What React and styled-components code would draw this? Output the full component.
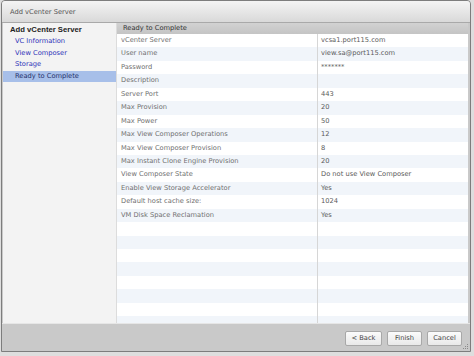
import React from 'react';
import styled, { createGlobalStyle } from 'styled-components';

const GlobalStyle = createGlobalStyle`
  html, body {
    margin: 0;
    padding: 0;
    background: #dedede;
  }
  body {
    font-family: "DejaVu Sans", Verdana, sans-serif;
    font-size: 6.7px;
  }
`;

const Window = styled.div`
  position: relative;
  margin-left: 1px;
  width: 470px;
  height: 352px;
  box-sizing: border-box;
  border: 1px solid #7d7d7d;
  border-radius: 4px 4px 0 0;
  background: #c9c9c9;
  display: flex;
  flex-direction: column;
  overflow: hidden;
`;

const TitleBar = styled.div`
  height: 21px;
  flex: none;
  display: flex;
  align-items: center;
  padding-left: 8px;
  color: #555;
  font-size: 6.7px;
  background: linear-gradient(#f4f4f4, #d9d9d9);
  border-bottom: 1px solid #a9a9a9;
`;

const Body = styled.div`
  flex: 1;
  display: flex;
  padding: 0 2px 0 1px;
  min-height: 0;
`;

const Nav = styled.div`
  width: 113px;
  flex: none;
  background: #f3f3f3;
  border-right: 1px solid #dcdcdc;
  padding-top: 1px;
`;

const NavTitle = styled.div`
  height: 12px;
  line-height: 12px;
  padding-left: 7px;
  font-family: "Liberation Sans", Arial, sans-serif;
  font-weight: bold;
  font-size: 7.7px;
  color: #222;
`;

const NavItem = styled.div`
  height: 11.6px;
  line-height: 11.6px;
  padding-left: 12px;
  color: ${({ active }) => (active ? '#1f2f6a' : '#2d32b8')};
  background: ${({ active }) => (active ? '#a7bfe9' : 'transparent')};
`;

const Panel = styled.div`
  flex: 1;
  display: flex;
  flex-direction: column;
  background: #fff;
  overflow: hidden;
`;

const PanelHeader = styled.div`
  height: 11px;
  flex: none;
  line-height: 11px;
  padding-left: 6px;
  color: #333;
  background: linear-gradient(#d2d2d2, #c4c4c4);
`;

const Grid = styled.div`
  flex: 1;
  overflow: hidden;
`;

const Row = styled.div`
  display: grid;
  grid-template-columns: 200px 1fr;
  height: 13.45px;
  line-height: 13.45px;
  background: ${({ alt }) => (alt ? '#f1f5fa' : '#fff')};
  color: #707070;
`;

const Label = styled.div`
  padding-left: 4px;
  white-space: nowrap;
  overflow: hidden;
`;

const Value = styled.div`
  padding-left: 3px;
  border-left: 1px solid #d6d6d6;
  color: #5a5a5a;
  white-space: nowrap;
  overflow: hidden;
`;

const Footer = styled.div`
  height: 26px;
  flex: none;
  display: flex;
  justify-content: flex-end;
  align-items: center;
  gap: 5px;
  padding-right: 8px;
  padding-top: 1px;
  border-top: 1px solid #e6e6e6;
`;

const Button = styled.button`
  height: 15px;
  width: ${({ w }) => w}px;
  padding: 0;
  font-family: inherit;
  font-size: 6.7px;
  color: #444;
  border: 1px solid #a8a8a8;
  border-radius: 2px;
  background: linear-gradient(#fbfbfb, #e9e9e9);
`;

const Grip = styled.svg`
  position: absolute;
  right: 1px;
  bottom: 1px;
`;

const rows = [
  ['vCenter Server', 'vcsa1.port115.com'],
  ['User name', 'view.sa@port115.com'],
  ['Password', '*******'],
  ['Description', ''],
  ['Server Port', '443'],
  ['Max Provision', '20'],
  ['Max Power', '50'],
  ['Max View Composer Operations', '12'],
  ['Max View Composer Provision', '8'],
  ['Max Instant Clone Engine Provision', '20'],
  ['View Composer State', 'Do not use View Composer'],
  ['Enable View Storage Accelerator', 'Yes'],
  ['Default host cache size:', '1024'],
  ['VM Disk Space Reclamation', 'Yes'],
];

const App = () => {
  const filled = [...rows];
  while (filled.length < 23) filled.push(['', '']);

  return (
    <>
      <GlobalStyle />
      <Window>
        <TitleBar>Add vCenter Server</TitleBar>
        <Body>
          <Nav>
            <NavTitle>Add vCenter Server</NavTitle>
            <NavItem>VC Information</NavItem>
            <NavItem>View Composer</NavItem>
            <NavItem>Storage</NavItem>
            <NavItem active>Ready to Complete</NavItem>
          </Nav>
          <Panel>
            <PanelHeader>Ready to Complete</PanelHeader>
            <Grid>
              {filled.map(([label, value], i) => (
                <Row key={i} alt={i % 2 === 1}>
                  <Label>{label}</Label>
                  <Value>{value}</Value>
                </Row>
              ))}
            </Grid>
          </Panel>
        </Body>
        <Footer>
          <Button w={37}>&lt; Back</Button>
          <Button w={35}>Finish</Button>
          <Button w={35}>Cancel</Button>
        </Footer>
        <Grip width="7" height="7" viewBox="0 0 7 7">
          <g fill="#8a8a8a">
            <rect x="5" y="1" width="1" height="1" />
            <rect x="3" y="3" width="1" height="1" />
            <rect x="5" y="3" width="1" height="1" />
            <rect x="1" y="5" width="1" height="1" />
            <rect x="3" y="5" width="1" height="1" />
            <rect x="5" y="5" width="1" height="1" />
          </g>
        </Grip>
      </Window>
    </>
  );
};

export default App;
